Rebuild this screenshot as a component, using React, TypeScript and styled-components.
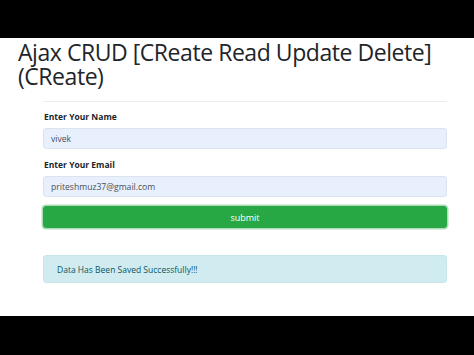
import React from "react";
import styled, { createGlobalStyle } from "styled-components";

const GlobalStyle = createGlobalStyle`
  html, body {
    margin: 0;
    padding: 0;
    background: #fff;
  }
  * {
    box-sizing: border-box;
  }
`;

const Screen = styled.div`
  width: 474px;
  height: 355px;
  display: flex;
  flex-direction: column;
  font-family: "Open Sans", "Noto Sans", sans-serif;
  color: #212529;
  overflow: hidden;
`;

const Letterbox = styled.div<{ $h: number }>`
  height: ${(p) => p.$h}px;
  flex-shrink: 0;
  background: #000;
`;

const Page = styled.main`
  flex: 1;
  display: flex;
  flex-direction: column;
`;

const Title = styled.h1`
  margin: 2px 0 0;
  padding-left: 18px;
  font-size: 23px;
  line-height: 24px;
  letter-spacing: -0.45px;
  font-weight: 400;
  color: #212529;
`;

const Container = styled.div`
  margin: 13px 27px 0 43px;
`;

const Rule = styled.hr`
  margin: 0;
  border: 0;
  border-top: 1px solid #ececec;
`;

const Form = styled.form`
  display: flex;
  flex-direction: column;
  padding-top: 9px;
`;

const Group = styled.div`
  display: flex;
  flex-direction: column;
  margin-bottom: 10px;
`;

const Label = styled.label`
  font-size: 8.5px;
  line-height: 12px;
  font-weight: 700;
  margin: 0 0 5px 1px;
`;

const Input = styled.input`
  height: 21px;
  padding: 0 7px;
  border: 1px solid #dde3ec;
  border-radius: 3px;
  background: #e8f0fe;
  color: #495057;
  font-family: inherit;
  font-size: 8.6px;
  outline: none;
`;

const SubmitButton = styled.button`
  height: 22px;
  margin-top: -1px;
  border: 1px solid #28a745;
  border-radius: 3px;
  background: #28a745;
  color: #fff;
  font-family: inherit;
  font-size: 9px;
  box-shadow: 0 0 0 1.5px rgba(72, 180, 97, 0.45);
`;

const Alert = styled.div`
  margin-top: 27px;
  height: 28px;
  display: flex;
  align-items: center;
  padding: 0 13px;
  border: 1px solid #c6e6ec;
  border-radius: 3px;
  background: #d1ecf1;
  color: #0c5460;
  font-size: 8.5px;
`;

export default function App() {
  return (
    <>
      <GlobalStyle />
      <Screen>
        <Letterbox $h={38} />
        <Page>
          <Title>
            Ajax CRUD [CReate Read Update Delete]
            <br />
            (CReate)
          </Title>
          <Container>
            <Rule />
            <Form onSubmit={(e) => e.preventDefault()}>
              <Group>
                <Label>Enter Your Name</Label>
                <Input defaultValue="vivek" />
              </Group>
              <Group>
                <Label>Enter Your Email</Label>
                <Input defaultValue="priteshmuz37@gmail.com" />
              </Group>
              <SubmitButton type="submit">submit</SubmitButton>
            </Form>
            <Alert>Data Has Been Saved Successfully!!!</Alert>
          </Container>
        </Page>
        <Letterbox $h={39} />
      </Screen>
    </>
  );
}
